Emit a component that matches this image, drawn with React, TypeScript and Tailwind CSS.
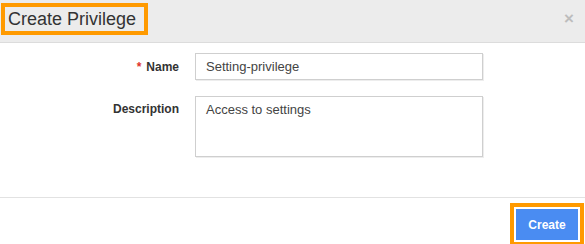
export default function App() {
  return (
    <div className="h-[244px] w-[585px] overflow-hidden bg-white font-['Liberation_Sans',Arial,sans-serif] text-[#333]">
      <div className="flex h-[43px] items-start justify-between border-b border-[#dcdcdc] bg-[#ececec]">
        <div className="ml-[1px] mt-[3px] flex h-[32px] items-center border-[4px] border-[#ff9a00] pl-[3px] pr-[8px]">
          <span className="text-[18px] leading-none text-[#333]">Create Privilege</span>
        </div>
        <span className="mr-[11px] mt-[10px] text-[17px] font-bold leading-none text-[#bdbdbd]">×</span>
      </div>

      <div className="flex h-[154px] flex-col gap-[16px] pt-[10px]">
        <div className="flex items-center">
          <label className="w-[180px] pr-[1px] text-right text-[12px] font-bold">
            <span className="mr-[5px] text-[#e0342b]">*</span>Name
          </label>
          <div className="ml-[15px] flex h-[27px] w-[288px] items-center border border-[#cfcfcf] px-[10px] text-[13px] text-[#444] shadow-[1px_1px_0_#ededed]">
            Setting-privilege
          </div>
        </div>
        <div className="flex items-start">
          <label className="w-[180px] pr-[1px] pt-[4px] text-right text-[12px] font-bold">Description</label>
          <div className="ml-[15px] h-[61px] w-[288px] border border-[#cfcfcf] px-[10px] pt-[3px] text-[13px] text-[#444] shadow-[1px_1px_0_#ededed]">
            Access to settings
          </div>
        </div>
      </div>

      <div className="flex justify-end border-t border-[#e2e2e2] pr-[1px] pt-[5px]">
        <div className="border-[4px] border-[#ff9a00] p-[2px]">
          <button
            type="button"
            className="h-[31px] w-[62px] bg-[#4a8cf2] text-[12px] font-bold text-white"
          >
            Create
          </button>
        </div>
      </div>
    </div>
  );
}
